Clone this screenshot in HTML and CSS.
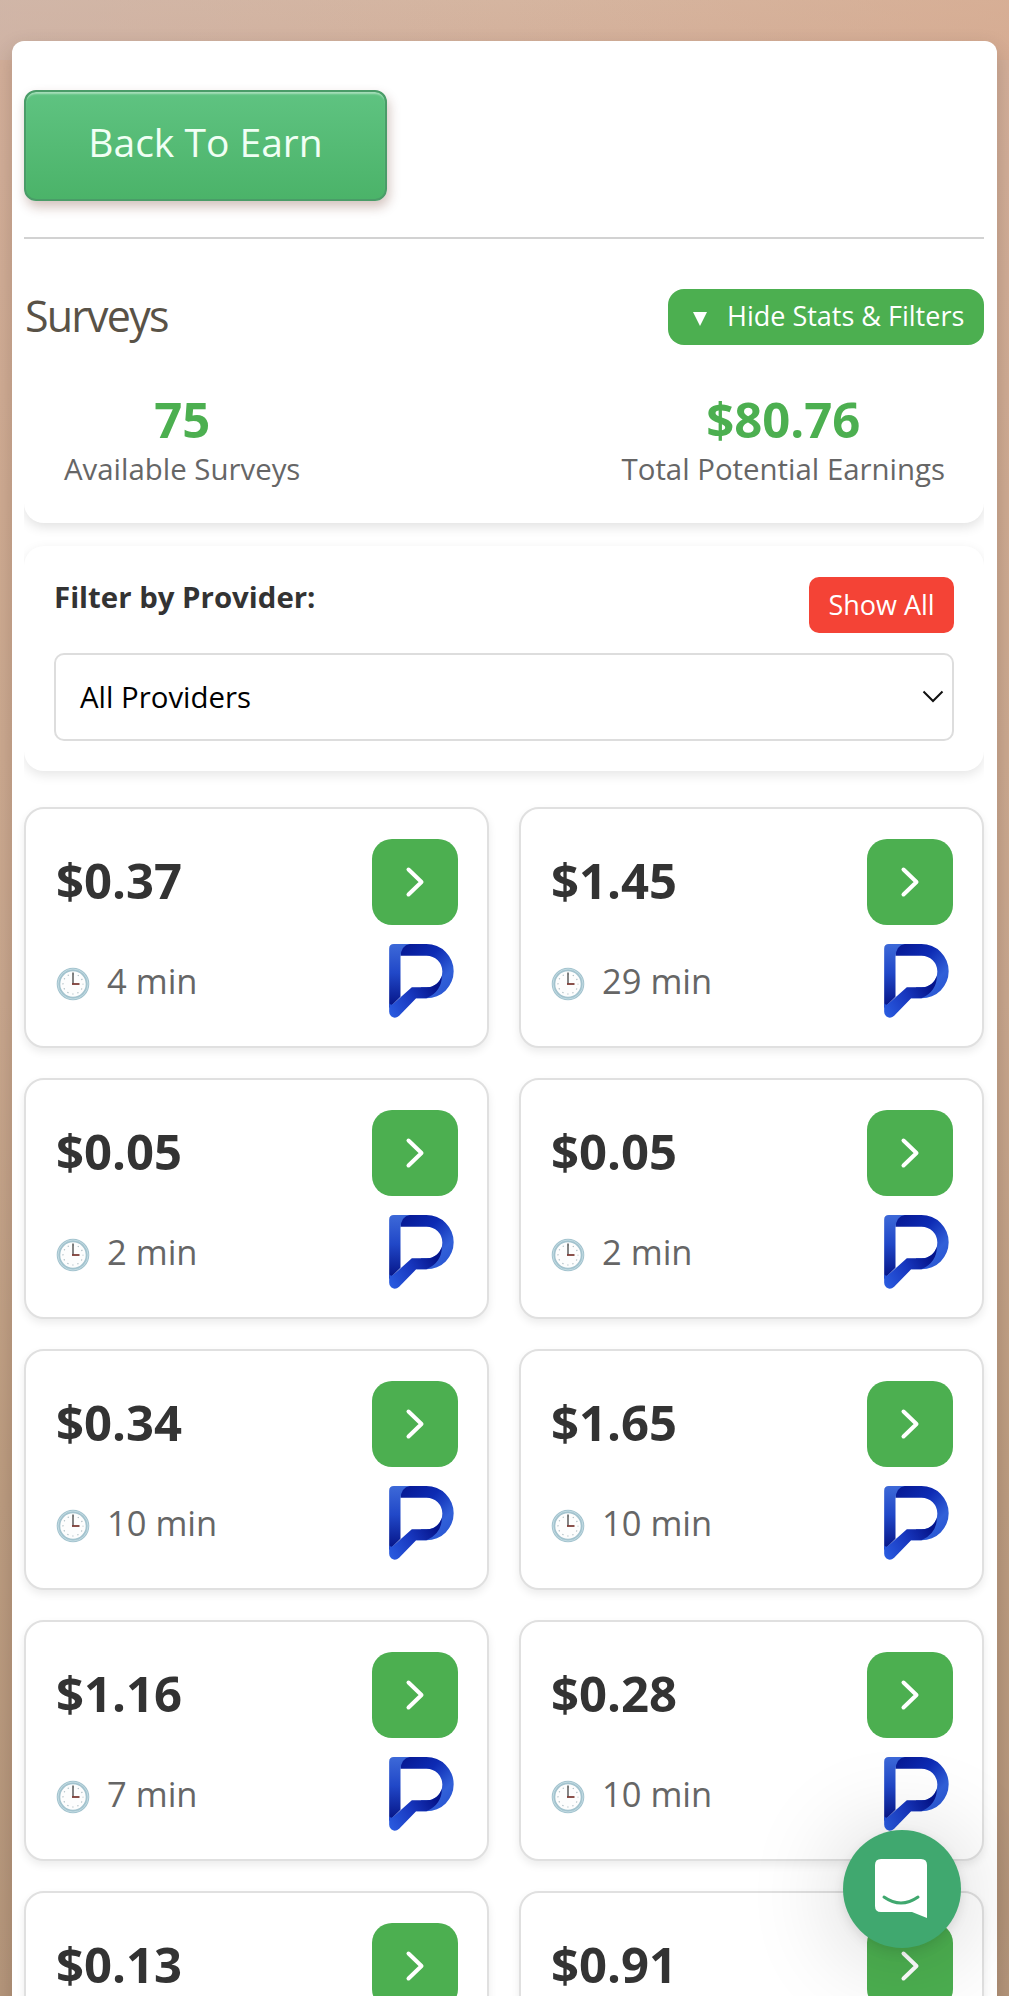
FILE: index.html
```html
<!DOCTYPE html>
<html lang="en">
<head>
    <meta charset="UTF-8">
    <meta name="viewport" content="width=device-width, initial-scale=1.0">
    <title>Surveys</title>
    <link rel="stylesheet" href="styles.css">
</head>
<body>
    <svg class="sprite" aria-hidden="true">
        <defs>
            <linearGradient id="stem" x1="0" y1="0" x2="0" y2="1">
                <stop offset="0" stop-color="#3d69d8"/>
                <stop offset="0.45" stop-color="#2148c8"/>
                <stop offset="1" stop-color="#041284"/>
            </linearGradient>
            <linearGradient id="bowl" x1="0" y1="0" x2="1" y2="1">
                <stop offset="0" stop-color="#06178f"/>
                <stop offset="0.4" stop-color="#0d2bb4"/>
                <stop offset="0.72" stop-color="#3160d8"/>
                <stop offset="1" stop-color="#2450d0"/>
            </linearGradient>
            <linearGradient id="tail" gradientUnits="userSpaceOnUse" x1="0" y1="210" x2="158" y2="120">
                <stop offset="0" stop-color="#2a5ce0"/>
                <stop offset="0.45" stop-color="#1838c0"/>
                <stop offset="0.9" stop-color="#05148a"/>
            </linearGradient>
            <symbol id="logo" viewBox="0 0 194 222">
                <path fill="url(#bowl)" d="M34 35V14Q38 0 56 0H112A81.500 81.500 0 0 1 112 163H81L96 130H112A47.500 47.500 0 0 0 112 35Z"/>
                <path fill="url(#stem)" d="M14 0H62Q36 4 34 38V158L0 192V14Q0 0 14 0Z"/>
                <path fill="url(#tail)" d="M0 178Q6 186 14 178L68 130H112Q146 130 158 96Q158 142 112 163H81L30 215Q18 226 6 217Q0 212 0 203Z"/>
            </symbol>
            <symbol id="arrow" viewBox="0 0 24 32">
                <path d="M5.500 3.500L18.500 16L5.500 28.500" fill="none" stroke="#fff" stroke-width="4" stroke-linecap="round" stroke-linejoin="round"/>
            </symbol>
            <symbol id="clock" viewBox="0 0 34 34">
                <circle cx="17" cy="17" r="14.500" fill="#fdfdfd" stroke="#a3c3ce" stroke-width="3.600"/>
                <circle cx="17" cy="17" r="15" fill="none" stroke="#c2dbe3" stroke-width="1"/>
                <circle cx="17" cy="17" r="10" fill="none" stroke="#a9b9bf" stroke-width="1.200" stroke-dasharray="1.200 4.036" stroke-dashoffset="0.600"/>
                <path d="M17 5.500V17" stroke="#444" stroke-width="1.300"/>
                <path d="M16 17H23.500" stroke="#7d3d36" stroke-width="1.800"/>
            </symbol>
        </defs>
    </svg>

    <div class="page">
        <div class="panel">
            <a class="back-button" href="#">Back To Earn</a>
            <hr>
            <div class="survey-header">
                <h2>Surveys</h2>
                <button class="toggle-button"><span class="caret"></span>Hide Stats &amp; Filters</button>
            </div>
            <div class="stats-filters">
                <div class="stats">
                    <div class="stat">
                        <div class="stat-value">75</div>
                        <div class="stat-label">Available Surveys</div>
                    </div>
                    <div class="stat">
                        <div class="stat-value">$80.76</div>
                        <div class="stat-label">Total Potential Earnings</div>
                    </div>
                </div>
                <div class="filters">
                    <div class="filter-header">
                        <span class="filter-title">Filter by Provider:</span>
                        <button class="show-all">Show All</button>
                    </div>
                    <div class="select">
                        <span>All Providers</span>
                        <svg width="24" height="16" viewBox="0 0 24 16"><path d="M2.500 2.500L12 12L21.500 2.500" fill="none" stroke="#111" stroke-width="2"/></svg>
                    </div>
                </div>
            </div>
            <div class="survey-grid" id="surveyGrid"></div>
        </div>
        <div class="chat">
            <svg width="54" height="60" viewBox="0 0 54 60">
                <path d="M6 0H46Q52 0 52 6V59L37 53H6Q0 53 0 47V6Q0 0 6 0Z" fill="#fff"/>
                <path d="M9 38Q26 50 43 38" fill="none" stroke="#40a86f" stroke-width="3" stroke-linecap="round"/>
            </svg>
        </div>
    </div>

    <script>
        var surveys = [
            ["$0.37", "4 min"], ["$1.45", "29 min"],
            ["$0.05", "2 min"], ["$0.05", "2 min"],
            ["$0.34", "10 min"], ["$1.65", "10 min"],
            ["$1.16", "7 min"], ["$0.28", "10 min"],
            ["$0.13", ""], ["$0.91", ""]
        ];

        document.getElementById("surveyGrid").innerHTML = surveys.map(function (s) {
            return '<div class="card">' +
                '<div class="card-row">' +
                    '<span class="reward">' + s[0] + '</span>' +
                    '<button class="go"><svg width="24" height="32"><use href="#arrow"/></svg></button>' +
                '</div>' +
                '<div class="card-row details">' +
                    '<span class="time"><svg width="34" height="34"><use href="#clock"/></svg><span>' + s[1] + '</span></span>' +
                    '<svg class="provider" width="65" height="74"><use href="#logo"/></svg>' +
                '</div>' +
            '</div>';
        }).join("");
    </script>
</body>
</html>
```
FILE: styles.css
```css
* {
    box-sizing: border-box;
}
body {
    margin: 0;
    font-family: 'Open Sans', 'Noto Sans', sans-serif;
    background-color: #fff;
    overflow: hidden;
}
button {
    border: none;
    font-family: inherit;
    color: white;
}
.sprite {
    position: absolute;
    width: 0;
    height: 0;
}
.page {
    position: relative;
    height: 1996px;
    padding: 41px 12px 0;
    overflow: hidden;
    background:
        linear-gradient(90deg, rgba(205, 182, 172, 0.6), rgba(215, 180, 158, 0) 50%, rgba(216, 170, 142, 0.6)) 0 0 / 100% 60px no-repeat,
        linear-gradient(#d5b5a0 0, #d3af9a 60px, #cfab92 500px, #c9a78e 1000px, #bc9c80 1500px, #b5967b 100%);
}
.panel {
    height: 2100px;
    padding: 49px 13px 0 12px;
    background-color: #fff;
    border-radius: 12px;
    box-shadow: 0 8px 20px rgba(60, 40, 30, 0.22);
}
.back-button {
    display: flex;
    align-items: center;
    justify-content: center;
    width: 363px;
    height: 111px;
    padding-bottom: 8px;
    font-size: 39px;
    color: #f0fff4;
    text-decoration: none;
    border: 2px solid #4a9c68;
    border-radius: 12px;
    background: linear-gradient(#5fc381, #4bb369);
    box-shadow: inset 0 3px 2px -1px rgba(255, 255, 255, 0.45), 2px 6px 12px rgba(90, 30, 10, 0.27);
}
hr {
    height: 2px;
    margin: 36px 0 50px;
    border: none;
    background-color: #d2d2d2;
}
.survey-header {
    display: flex;
    align-items: center;
    justify-content: space-between;
    height: 56px;
}
h2 {
    margin: 0 0 3px 1px;
    font-size: 43px;
    font-weight: 400;
    letter-spacing: -1.8px;
    color: #595247;
}
.toggle-button {
    display: flex;
    align-items: center;
    width: 316px;
    height: 56px;
    padding: 0 20px 3px 25px;
    font-size: 27px;
    white-space: nowrap;
    border-radius: 16px;
    background-color: #4caf50;
}
.caret {
    margin: 7px 20px 0 0;
    border: 7px solid transparent;
    border-top: 14px solid white;
    border-bottom: 0;
}
.stats-filters {
    padding-bottom: 36px;
    overflow: hidden;
}
.stats {
    display: flex;
    justify-content: space-between;
    height: 178px;
    padding: 41px 39px 0 40px;
    border-radius: 0 0 20px 20px;
    background-color: #fff;
    box-shadow: 0 4px 12px rgba(0, 0, 0, 0.12);
}
.stat {
    text-align: center;
}
.stat-value {
    font-size: 49px;
    line-height: 67px;
    font-weight: 700;
    color: #4caf50;
}
.stat-label {
    font-size: 29.4px;
    line-height: 32px;
    color: #666;
}
.filters {
    height: 225px;
    margin-top: 23px;
    padding: 31px 30px;
    border-radius: 20px;
    background-color: #fff;
    box-shadow: 0 4px 12px rgba(0, 0, 0, 0.1);
}
.filter-header {
    display: flex;
    justify-content: space-between;
    margin-bottom: 20px;
}
.filter-title {
    font-size: 29.4px;
    line-height: 41px;
    font-weight: 700;
    color: #333;
}
.show-all {
    width: 145px;
    height: 56px;
    padding: 0 0 2px;
    font-size: 27px;
    border-radius: 10px;
    background-color: #f44336;
}
.select {
    display: flex;
    align-items: center;
    justify-content: space-between;
    height: 88px;
    padding: 0 7px 0 24px;
    font-size: 29.4px;
    color: #000;
    border: 2px solid #ddd;
    border-radius: 10px;
}
.survey-grid {
    display: grid;
    grid-template-columns: 1fr 1fr;
    column-gap: 30px;
    row-gap: 30px;
}
.card {
    height: 241px;
    padding: 30px 29px 0 30px;
    border: 2px solid #e0e0e0;
    border-radius: 20px;
    background-color: #fff;
    box-shadow: 0 4px 8px rgba(0, 0, 0, 0.08);
}
.card-row {
    display: flex;
    align-items: center;
    justify-content: space-between;
}
.reward {
    margin-bottom: 5px;
    font-size: 49px;
    line-height: 60px;
    font-weight: 700;
    color: #333;
}
.go {
    display: flex;
    align-items: center;
    justify-content: center;
    width: 86px;
    height: 86px;
    padding: 0;
    border-radius: 20px;
    background-color: #4caf50;
}
.details {
    margin-top: 19px;
}
.time {
    display: flex;
    align-items: center;
    gap: 17px;
    font-size: 34.5px;
    line-height: 48px;
    color: #666;
}
.time svg {
    margin-top: 5px;
}
.provider {
    margin-right: 4px;
}
.chat {
    position: absolute;
    left: 843px;
    top: 1830px;
    display: flex;
    align-items: center;
    justify-content: center;
    width: 118px;
    height: 118px;
    border-radius: 50%;
    background-color: #40a86f;
    box-shadow: 0 4px 12px rgba(0, 0, 0, 0.1), 0 6px 100px rgba(0, 0, 0, 0.2);
}
```
